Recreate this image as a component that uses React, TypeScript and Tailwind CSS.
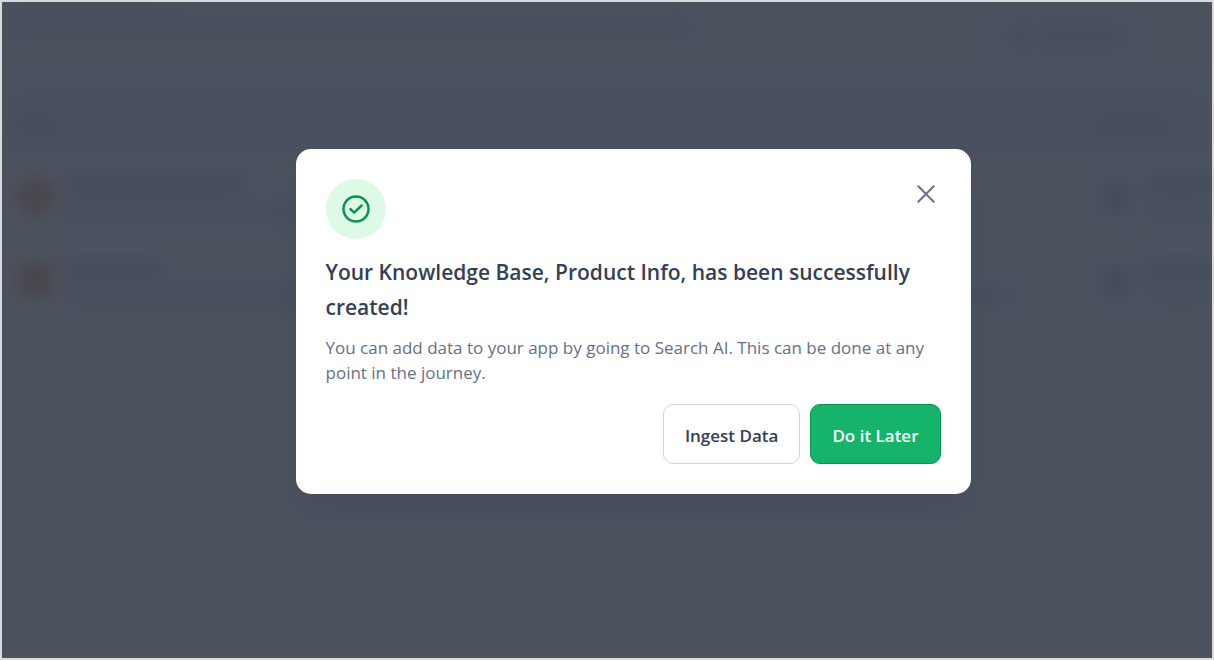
import React from 'react';

interface RowProps {
  nameClass: string;
  detailClass: string;
}

const BackdropRow: React.FC<RowProps> = ({ nameClass, detailClass }) => (
  <div className="flex h-21 items-start justify-between">
    <div className="flex flex-1 items-start gap-3">
      <div className="h-9 w-9 rounded-lg bg-[#4a464c]" />
      <div className="flex flex-1 flex-col gap-3">
        <div className={`h-4 bg-[#434a5a] ${nameClass}`} />
        <div className={`h-3 bg-[#454d5c] ${detailClass}`} />
      </div>
    </div>
    <div className="flex w-28 items-start gap-4">
      <div className="mt-1 h-8 w-8 rounded-full bg-[#434b5a]" />
      <div className="flex flex-1 flex-col gap-3">
        <div className="h-4 bg-[#434a5a]" />
        <div className="h-3 bg-[#464e5c]" />
      </div>
    </div>
  </div>
);

// Dimmed list page behind the dialog
const Backdrop: React.FC = () => (
  <div className="blur-[8px]" aria-hidden="true">
    <div className="flex h-21 items-start justify-between pr-20 pl-2">
      <div className="flex w-[680px] flex-col gap-3">
        <div className="h-1 w-40 bg-[#404959]" />
        <div className="h-4 bg-[#464d5c]" />
      </div>
      <div className="mt-4 flex h-9 items-center gap-3 rounded-lg bg-[#4a515f] px-3">
        <div className="h-4 w-4 rounded-full bg-[#434c5c]" />
        <div className="h-4 w-20 bg-[#464d5c]" />
      </div>
    </div>
    <div className="flex h-18 items-center justify-between bg-[#4a505f] pt-2 pr-11 pl-4">
      <div className="h-4 w-10 bg-[#424b5a]" />
      <div className="h-4 w-19 bg-[#424b5a]" />
    </div>
    <div className="pt-5 pl-4">
      <BackdropRow nameClass="w-[180px]" detailClass="w-[260px]" />
      <BackdropRow nameClass="w-[95px]" detailClass="w-[950px]" />
    </div>
  </div>
);

const SuccessDialog: React.FC = () => (
  <div
    role="dialog"
    aria-modal="true"
    aria-labelledby="dialog-title"
    className="w-full max-w-[675px] rounded-[15px] bg-white p-[30px] shadow-[0_20px_30px_-5px_rgba(16,24,40,0.1)]"
  >
    <div className="flex items-start justify-between">
      <div className="flex h-15 w-15 items-center justify-center rounded-full bg-[#dcfae6]">
        <svg className="h-[30px] w-[30px]" viewBox="0 0 30 30" fill="none" stroke="#099250" strokeWidth="2.5" strokeLinecap="round" strokeLinejoin="round">
          <circle cx="15" cy="15" r="12.5" />
          <path d="M9.4 15.2 L13.1 18.7 L20.6 11.5" />
        </svg>
      </div>
      <button type="button" aria-label="Close" className="h-[30px] w-[30px] cursor-pointer">
        <svg className="h-[30px] w-[30px]" viewBox="0 0 30 30" fill="none" stroke="#667085" strokeWidth="2" strokeLinecap="round">
          <path d="M7.3 7.3 L22.7 22.7 M22.7 7.3 L7.3 22.7" />
        </svg>
      </button>
    </div>
    <h2 id="dialog-title" className="mt-4 text-[21px] leading-[35px] font-semibold text-[#344054]">
      Your Knowledge Base, Product Info, has been successfully created!
    </h2>
    <p className="mt-[10px] text-[17px] leading-[25px] text-[#667085]">
      You can add data to your app by going to Search AI. This can be done at any point in the journey.
    </p>
    <div className="mt-[19px] flex justify-end gap-[10px]">
      <button type="button" className="h-15 cursor-pointer rounded-[10px] border border-[#d0d5dd] bg-white px-[21px] pt-1 text-[17px] font-semibold text-[#344054]">
        Ingest Data
      </button>
      <button type="button" className="h-15 cursor-pointer rounded-[10px] border border-[#099250] bg-[#16b36b] px-[21px] pt-1 text-[17px] font-semibold text-white">
        Do it Later
      </button>
    </div>
  </div>
);

const App: React.FC = () => {
  return (
    <main className="relative min-h-screen overflow-hidden border-2 border-[#dadadd] bg-[#4c535f] font-['Open_Sans','Noto_Sans',sans-serif]">
      <Backdrop />
      <div className="absolute inset-0 flex items-center justify-center pb-[17px] pl-[52px]">
        <SuccessDialog />
      </div>
    </main>
  );
};

export default App;
